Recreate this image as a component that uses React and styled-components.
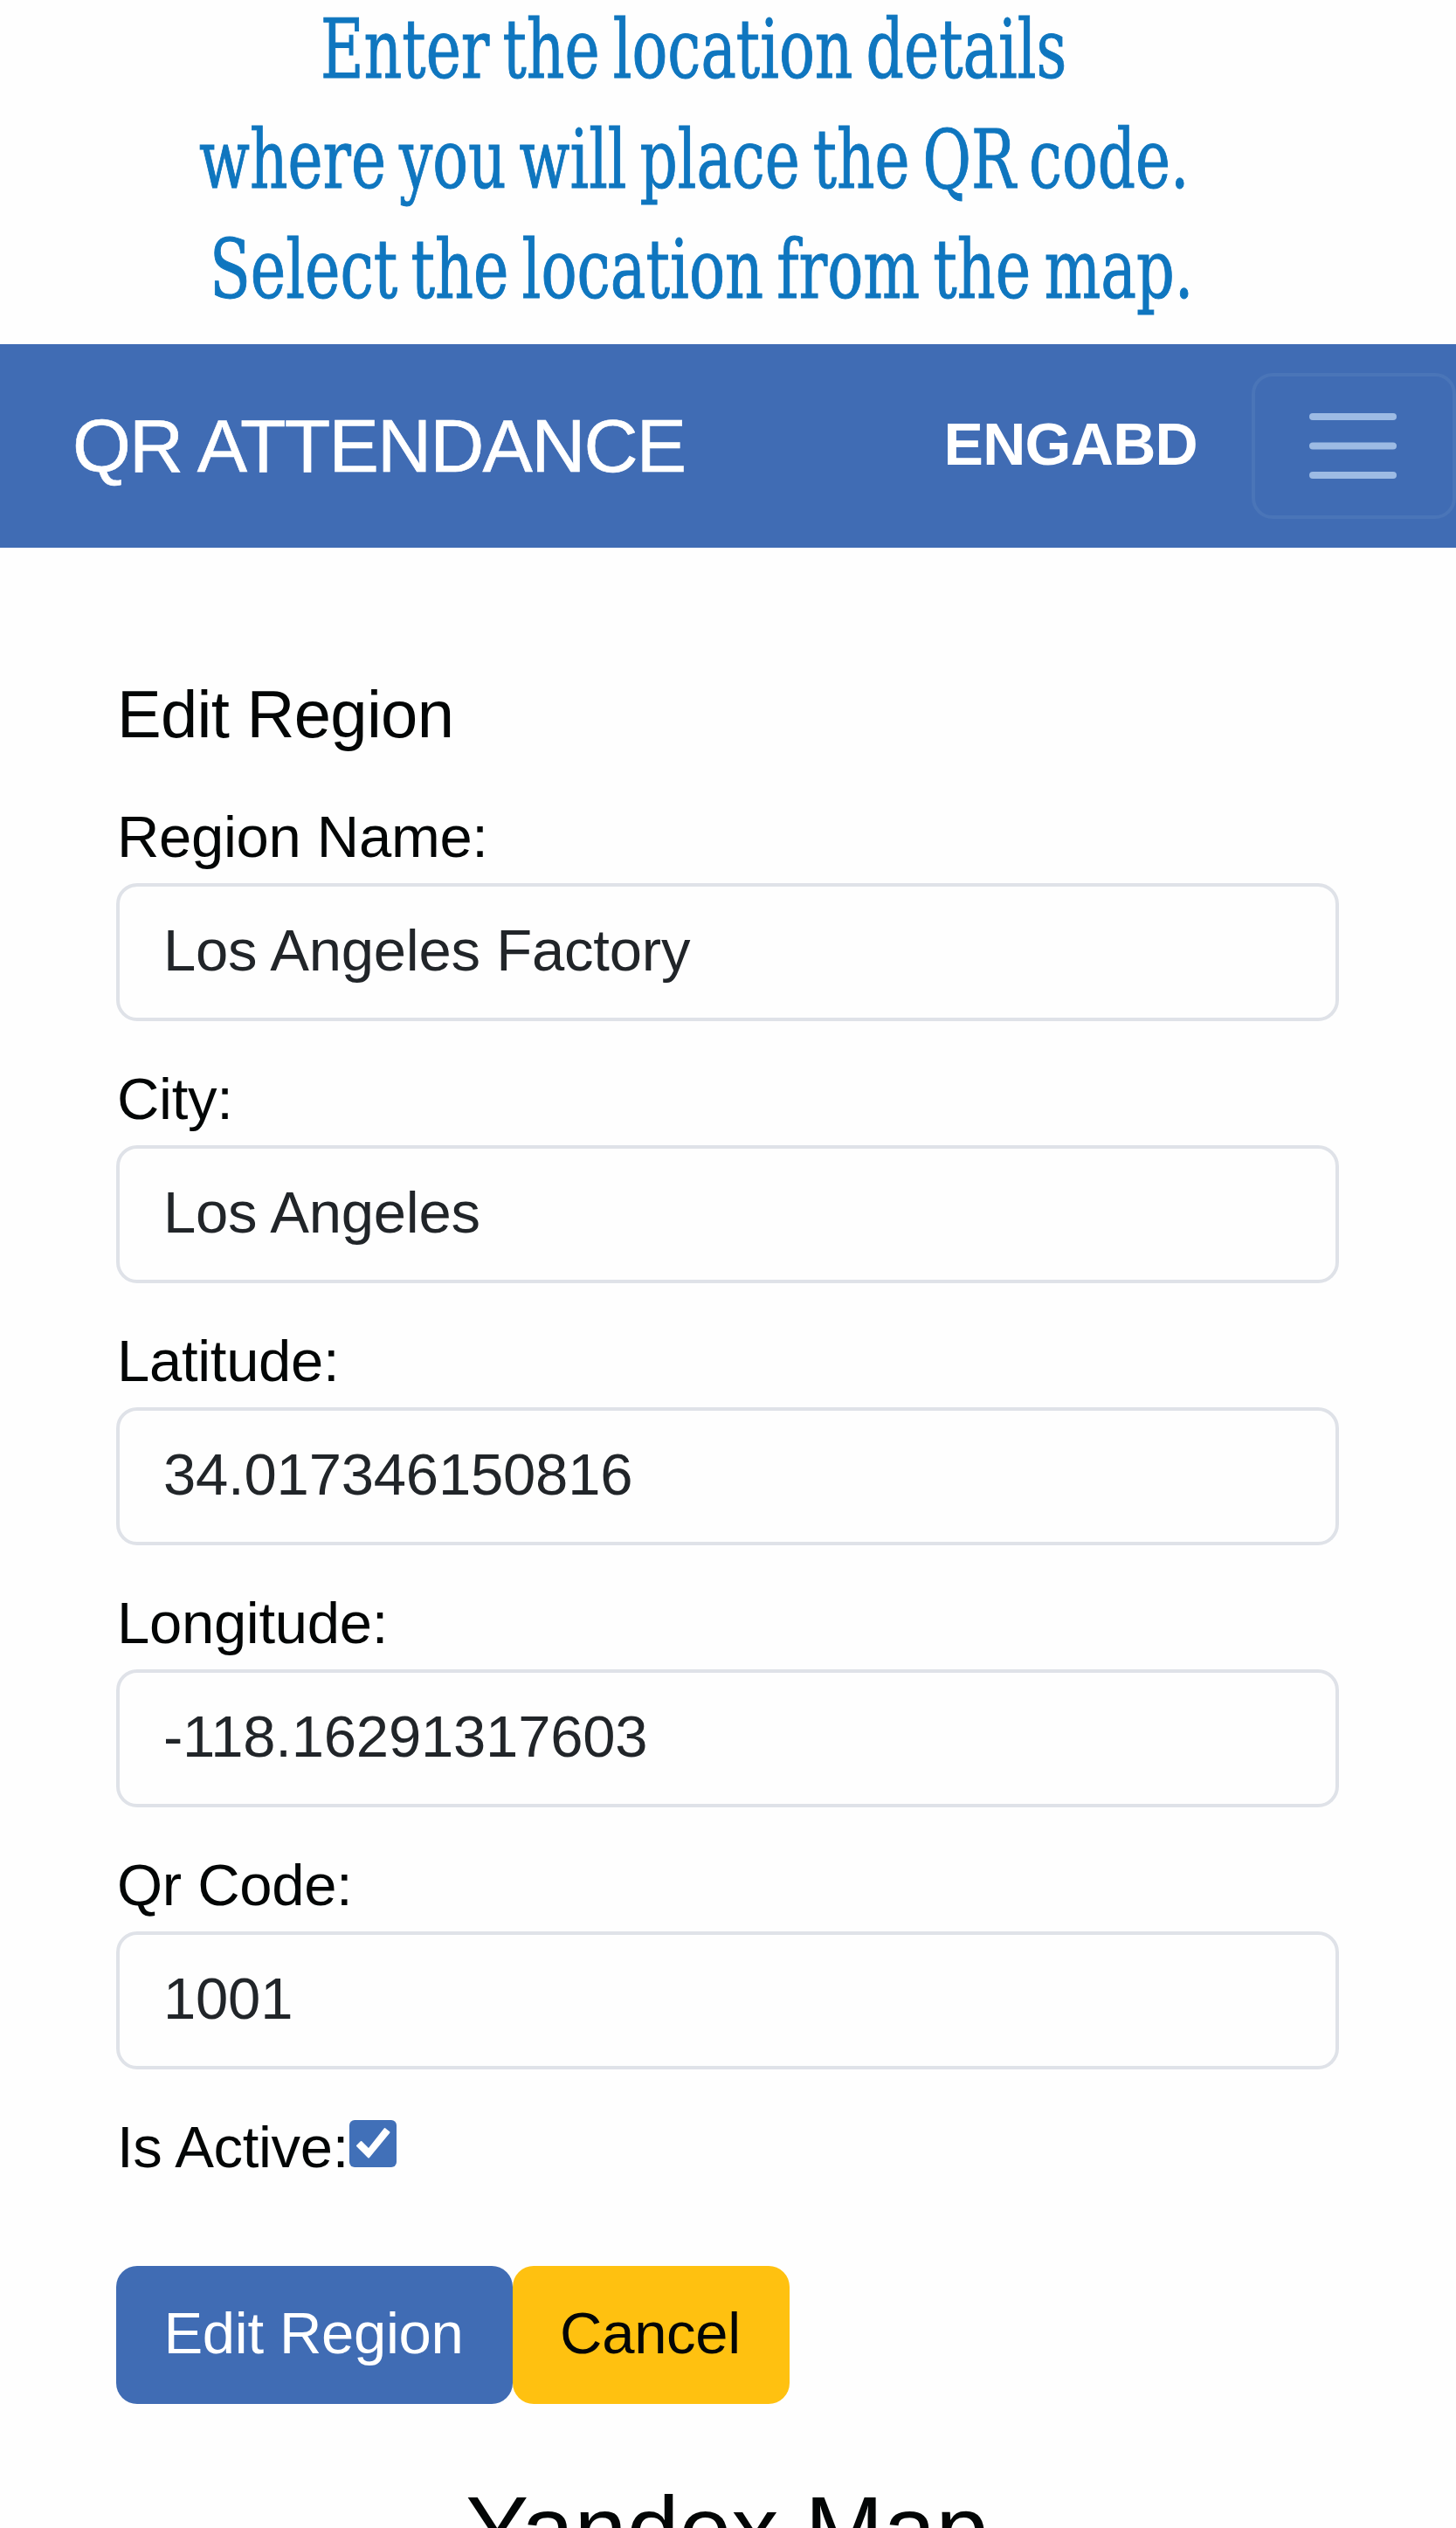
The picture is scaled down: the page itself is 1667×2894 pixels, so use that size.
import React from 'react';
import styled, { createGlobalStyle } from 'styled-components';

const GlobalStyle = createGlobalStyle`
  * {
    box-sizing: border-box;
  }
  body {
    margin: 0;
    background: #fefefe;
    color: #030606;
    font-family: 'Liberation Sans', Arial, sans-serif;
    font-size: 67px;
  }
`

const Page = styled.div`
  width: 1667px;
  height: 2894px;
  overflow: hidden;
`

const Caption = styled.div`
  height: 394px;
  overflow: hidden;
`

const CaptionLine = styled.p`
  margin: ${props => props.$top || 0}px 0 0 ${props => props.$left}px;
  width: max-content;
  color: #0f76bf;
  font-family: 'DejaVu Serif Condensed', 'DejaVu Serif', serif;
  font-stretch: condensed;
  font-size: 93px;
  line-height: 125.3px;
  word-spacing: -8px;
  white-space: nowrap;
  transform: scaleX(${props => props.$stretch});
  transform-origin: left;
  -webkit-text-stroke: 1px #0f76bf;
`

const Navbar = styled.nav`
  display: flex;
  align-items: center;
  height: 233px;
  padding-left: 83px;
  background: #406cb4;
  color: #fff;
`

const Brand = styled.a`
  font-size: 86px;
  letter-spacing: -1.8px;
  line-height: 100px;
  padding-bottom: 2px;
  -webkit-text-stroke: 0.6px #fff;
`

const User = styled.strong`
  margin-left: auto;
  margin-right: 62px;
  padding-bottom: 5px;
  font-size: 68px;
  letter-spacing: -0.7px;
`

const Toggler = styled.button`
  display: flex;
  align-items: center;
  justify-content: center;
  width: 234px;
  height: 167px;
  padding: 0 2px 0 0;
  border: 4px solid #4a75b8;
  border-radius: 24px;
  background: transparent;
`

const Form = styled.form`
  padding: 146px 134px 0 133px;
`

const Title = styled.h5`
  margin: 0 0 41px 0;
  padding-left: 1px;
  font-size: 76px;
  font-weight: 400;
  line-height: 90px;
  letter-spacing: -0.7px;
`

const Field = styled.div`
  margin-bottom: 35px;
`

const Label = styled.label`
  display: block;
  padding-left: 1px;
  line-height: 107px;
  letter-spacing: -0.3px;
`

const Input = styled.input`
  display: block;
  width: 100%;
  height: 158px;
  padding: 0 50px 5px 50px;
  border: 4px solid #dfe2e8;
  border-radius: 24px;
  background: #fefefe;
  color: #212529;
  font-family: inherit;
  font-size: 67px;
  letter-spacing: -0.2px;
  outline: none;
`

const CheckRow = styled.div`
  display: flex;
  align-items: center;
  height: 107px;
`

const Checkbox = styled.span`
  width: 54px;
  height: 54px;
  border-radius: 6px;
  background: #4170b8;
  margin: -7px 0 0 1px;

  svg {
    display: block;
  }
`

const Buttons = styled.div`
  display: flex;
  margin-top: 83px;
`

const Button = styled.button`
  width: ${props => props.$width}px;
  height: 158px;
  padding: 0 2px 5px 0;
  border: 0;
  border-radius: 24px;
  background: ${props => props.$warning ? '#ffc110' : '#406cb4'};
  color: ${props => props.$warning ? '#030606' : '#fff'};
  font-family: inherit;
  font-size: 67px;
  letter-spacing: -0.3px;
`

const MapTitle = styled.h2`
  margin: 79px 0 0 -2px;
  font-size: 108px;
  font-weight: 400;
  line-height: 130px;
  text-align: center;
`

const fields = [
  { label: 'Region Name:', value: 'Los Angeles Factory' },
  { label: 'City:', value: 'Los Angeles' },
  { label: 'Latitude:', value: '34.017346150816' },
  { label: 'Longitude:', value: '-118.16291317603' },
  { label: 'Qr Code:', value: '1001' },
]

const App = () => (
  <Page>
    <GlobalStyle />
    <Caption>
      <CaptionLine $top={-5} $left={367} $stretch={0.812}>Enter the location details</CaptionLine>
      <CaptionLine $top={1} $left={228} $stretch={0.809}>where you will place the QR code.</CaptionLine>
      <CaptionLine $left={240} $stretch={0.817}>Select the location from the map.</CaptionLine>
    </Caption>

    <Navbar>
      <Brand>QR ATTENDANCE</Brand>
      <User>ENGABD</User>
      <Toggler type="button">
        <svg width="100" height="75" viewBox="0 0 100 75" stroke="#9dbbe4" strokeWidth="8" strokeLinecap="round">
          <path d="M4 4H96M4 37.5H96M4 71H96" />
        </svg>
      </Toggler>
    </Navbar>

    <Form>
      <Title>Edit Region</Title>
      {fields.map(field => (
        <Field key={field.label}>
          <Label>{field.label}</Label>
          <Input type="text" defaultValue={field.value} />
        </Field>
      ))}
      <CheckRow>
        <Label>Is Active:</Label>
        <Checkbox>
          <svg width="54" height="54" viewBox="0 0 54 54" fill="#fff" stroke="#fff" strokeWidth="2" strokeLinejoin="round">
            <path d="M9 29.5L13.5 25L22 33.5L40.5 10L45.5 14L22 42.5Z" />
          </svg>
        </Checkbox>
      </CheckRow>
      <Buttons>
        <Button type="button" $width={454}>Edit Region</Button>
        <Button type="button" $width={317} $warning>Cancel</Button>
      </Buttons>
    </Form>
    <MapTitle>Yandex Map</MapTitle>
  </Page>
)

export default App;
